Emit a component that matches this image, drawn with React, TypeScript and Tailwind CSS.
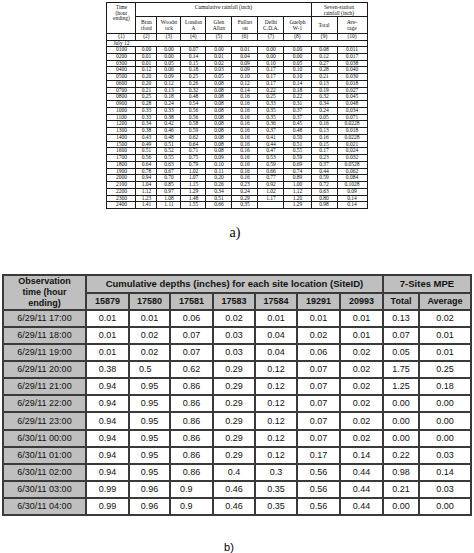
import React from 'react';

const rainfallRows: string[][] = [
  ['0100', '0.00', '0.00', '0.07', '0.00', '0.01', '0.00', '0.00', '0.08', '0.011'],
  ['0200', '0.01', '0.00', '0.14', '0.01', '0.04', '0.00', '0.00', '0.12', '0.017'],
  ['0300', '0.01', '0.05', '0.15', '0.02', '0.09', '0.10', '0.05', '0.27', '0.038'],
  ['0400', '0.12', '0.06', '0.18', '0.03', '0.09', '0.17', '0.10', '0.28', '0.040'],
  ['0500', '0.20', '0.09', '0.25', '0.05', '0.10', '0.17', '0.10', '0.21', '0.030'],
  ['0600', '0.20', '0.12', '0.26', '0.08', '0.12', '0.17', '0.14', '0.13', '0.018'],
  ['0700', '0.21', '0.13', '0.32', '0.08', '0.14', '0.22', '0.18', '0.19', '0.027'],
  ['0800', '0.25', '0.18', '0.48', '0.08', '0.16', '0.25', '0.22', '0.32', '0.045'],
  ['0900', '0.28', '0.24', '0.54', '0.08', '0.16', '0.33', '0.31', '0.34', '0.048'],
  ['1000', '0.33', '0.33', '0.56', '0.08', '0.16', '0.35', '0.37', '0.24', '0.034'],
  ['1100', '0.33', '0.38', '0.56', '0.08', '0.16', '0.35', '0.37', '0.05', '0.071'],
  ['1200', '0.34', '0.42', '0.58', '0.08', '0.16', '0.36', '0.45', '0.16', '0.0228'],
  ['1300', '0.38', '0.46', '0.59', '0.08', '0.16', '0.37', '0.48', '0.13', '0.018'],
  ['1400', '0.43', '0.48', '0.62', '0.08', '0.16', '0.41', '0.50', '0.16', '0.0228'],
  ['1500', '0.49', '0.51', '0.64', '0.08', '0.16', '0.44', '0.51', '0.15', '0.021'],
  ['1600', '0.51', '0.52', '0.71', '0.08', '0.16', '0.47', '0.55', '0.17', '0.024'],
  ['1700', '0.56', '0.55', '0.75', '0.09', '0.16', '0.53', '0.59', '0.23', '0.032'],
  ['1800', '0.64', '0.63', '0.79', '0.10', '0.16', '0.59', '0.69', '0.37', '0.0528'],
  ['1900', '0.78', '0.67', '1.02', '0.11', '0.16', '0.66', '0.74', '0.44', '0.062'],
  ['2000', '0.94', '0.70', '1.07', '0.20', '0.16', '0.77', '0.89', '0.59', '0.084'],
  ['2100', '1.04', '0.85', '1.15', '0.26', '0.23', '0.92', '1.00', '0.72', '0.1028'],
  ['2200', '1.12', '0.97', '1.29', '0.34', '0.24', '1.02', '1.12', '0.63', '0.09'],
  ['2300', '1.23', '1.08', '1.48', '0.51', '0.29', '1.17', '1.20', '0.80', '0.14'],
  ['2400', '1.41', '1.11', '1.55', '0.66', '0.35', '', '1.29', '0.98', '0.14'],
];

const rainfallCols = [29, 21, 24, 25, 26, 26, 26, 27, 26, 30];

const stations = [
  ['Bran', 'tford'],
  ['Woodst', 'ock'],
  ['London', 'A'],
  ['Glen', 'Allan'],
  ['Fullart', 'on'],
  ['Delhi', 'C.D.A.'],
  ['Guelph', 'W-1'],
  ['Total'],
  ['Ave-', 'rage'],
];

const depthRows: { time: string; values: string[]; left?: number[] }[] = [
  { time: '6/29/11 17:00', values: ['0.01', '0.01', '0.06', '0.02', '0.01', '0.01', '0.01', '0.13', '0.02'] },
  { time: '6/29/11 18:00', values: ['0.01', '0.02', '0.07', '0.03', '0.04', '0.02', '0.01', '0.07', '0.01'] },
  { time: '6/29/11 19:00', values: ['0.01', '0.02', '0.07', '0.03', '0.04', '0.06', '0.02', '0.05', '0.01'] },
  { time: '6/29/11 20:00', values: ['0.38', '0.5', '0.62', '0.29', '0.12', '0.07', '0.02', '1.75', '0.25'], left: [1] },
  { time: '6/29/11 21:00', values: ['0.94', '0.95', '0.86', '0.29', '0.12', '0.07', '0.02', '1.25', '0.18'] },
  { time: '6/29/11 22:00', values: ['0.94', '0.95', '0.86', '0.29', '0.12', '0.07', '0.02', '0.00', '0.00'] },
  { time: '6/29/11 23:00', values: ['0.94', '0.95', '0.86', '0.29', '0.12', '0.07', '0.02', '0.00', '0.00'] },
  { time: '6/30/11 00:00', values: ['0.94', '0.95', '0.86', '0.29', '0.12', '0.07', '0.02', '0.00', '0.00'] },
  { time: '6/30/11 01:00', values: ['0.94', '0.95', '0.86', '0.29', '0.12', '0.17', '0.14', '0.22', '0.03'] },
  { time: '6/30/11 02:00', values: ['0.94', '0.95', '0.86', '0.4', '0.3', '0.56', '0.44', '0.98', '0.14'] },
  { time: '6/30/11 03:00', values: ['0.99', '0.96', '0.9', '0.46', '0.35', '0.56', '0.44', '0.21', '0.03'], left: [2] },
  { time: '6/30/11 04:00', values: ['0.99', '0.96', '0.9', '0.46', '0.35', '0.56', '0.44', '0.00', '0.00'], left: [2] },
];

const depthCols = [83, 43, 41, 43, 42, 42, 43, 43, 36, 52];
const siteIds = ['15879', '17580', '17581', '17583', '17584', '19291', '20993', 'Total', 'Average'];

export default function App() {
  return (
    <main className="w-[474px] h-[553px] bg-white flex flex-col items-center overflow-hidden text-black">
      <RainfallTable />
      <div
        className="h-[14px] mt-[17px] ml-[-4px] text-[14px] leading-[14px]"
        style={{ fontFamily: '"Liberation Serif", serif' }}
      >
        a)
      </div>
      <DepthsTable />
      <div
        className="mt-[27px] ml-[-16px] text-[11px] leading-[11px]"
        style={{ fontFamily: '"Liberation Sans", Arial, sans-serif' }}
      >
        b)
      </div>
    </main>
  );
}

function RainfallTable() {
  const cell = 'border border-[#1a1a1a] p-0 text-center font-normal';
  return (
    <table
      className="mt-[2px] w-[260px] table-fixed border-collapse border border-[#111] text-[5.5px] leading-[5.5px] text-[#111]"
      style={{ fontFamily: '"Liberation Serif", "Times New Roman", serif' }}
    >
      <colgroup>
        {rainfallCols.map((w, i) => (
          <col key={i} style={{ width: w }} />
        ))}
      </colgroup>
      <thead>
        <tr className="h-[13px]">
          <th rowSpan={2} className={`${cell} align-top pt-[2px]`}>
            Time
            <br />
            (hour
            <br />
            ending)
          </th>
          <th colSpan={7} className={`${cell} align-top pt-[1.5px]`}>
            Cumulative rainfall (inch)
          </th>
          <th colSpan={2} className={`${cell} align-top pt-[0.5px] leading-[6px]`}>
            Seven-station
            <br />
            rainfall (inch)
          </th>
        </tr>
        <tr className="h-[17px]">
          {stations.map((s, i) => (
            <th key={i} className={`${cell} leading-[6px]`}>
              {s.map((part, j) => (
                <React.Fragment key={j}>
                  {j > 0 && <br />}
                  {part}
                </React.Fragment>
              ))}
            </th>
          ))}
        </tr>
        <tr className="h-[7px]">
          {rainfallCols.map((_, i) => (
            <th key={i} className={cell}>
              ({i + 1})
            </th>
          ))}
        </tr>
      </thead>
      <tbody>
        <tr className="h-[6.5px]">
          <td colSpan={10} className="border border-[#1a1a1a] p-0 pl-[6px] text-left">
            July 12
          </td>
        </tr>
        {rainfallRows.map((row) => (
          <tr key={row[0]} className="h-[6.75px]">
            {row.map((v, i) => (
              <td key={i} className={cell}>
                {v}
              </td>
            ))}
          </tr>
        ))}
      </tbody>
    </table>
  );
}

function DepthsTable() {
  const line = 'border-2 border-[#3a3a3a]';
  return (
    <table
      className={`mt-[34px] w-[468px] table-fixed border-collapse ${line} text-[9px] text-[#111]`}
      style={{ fontFamily: '"Liberation Sans", Arial, sans-serif' }}
    >
      <colgroup>
        {depthCols.map((w, i) => (
          <col key={i} style={{ width: w }} />
        ))}
      </colgroup>
      <thead className="bg-[#bfbfbf] font-bold">
        <tr className="h-[17px]">
          <th rowSpan={2} className={`${line} p-0 leading-[11px] font-bold`}>
            Observation
            <br />
            time (hour
            <br />
            ending)
          </th>
          <th colSpan={7} className={`${line} p-0 leading-none font-bold text-[9.5px]`}>
            Cumulative depths (inches) for each site location (SiteID)
          </th>
          <th colSpan={2} className={`${line} p-0 leading-none font-bold text-[9.5px]`}>
            7-Sites MPE
          </th>
        </tr>
        <tr className="h-[17px]">
          {siteIds.map((id) => (
            <th key={id} className={`${line} p-0 leading-none font-bold`}>
              {id}
            </th>
          ))}
        </tr>
      </thead>
      <tbody>
        {depthRows.map((row) => (
          <tr key={row.time} className="h-[17px]">
            <td className={`${line} bg-[#bfbfbf] p-0 text-center leading-none`}>{row.time}</td>
            {row.values.map((v, i) => (
              <td
                key={i}
                className={`${line} p-0 leading-none ${row.left?.includes(i) ? 'text-left pl-[9px]' : 'text-center'}`}
              >
                {v}
              </td>
            ))}
          </tr>
        ))}
      </tbody>
    </table>
  );
}
